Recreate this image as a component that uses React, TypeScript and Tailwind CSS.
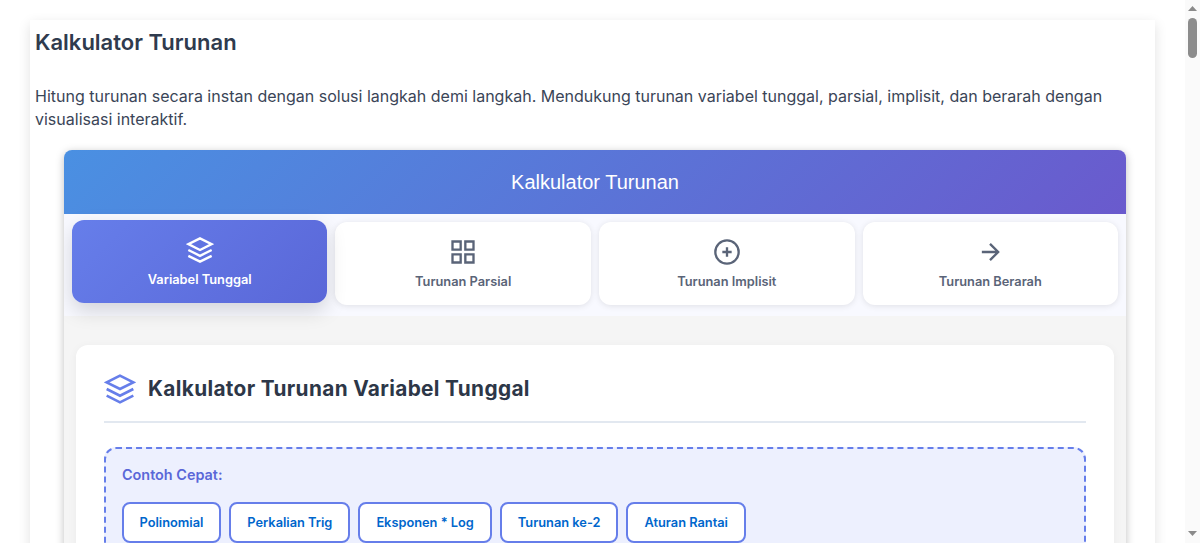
const tabs = [
  { label: "Variabel Tunggal", icon: "layers" },
  { label: "Turunan Parsial", icon: "grid" },
  { label: "Turunan Implisit", icon: "plus" },
  { label: "Turunan Berarah", icon: "arrow" },
];

const examples = ["Polinomial", "Perkalian Trig", "Eksponen * Log", "Turunan ke-2", "Aturan Rantai"];

function TabIcon({ name, className }: { name: string; className: string }) {
  return (
    <svg viewBox="0 0 24 24" fill="none" stroke="currentColor" strokeWidth="2" className={className}>
      {name === "layers" && <path d="M12 2L2 7l10 5 10-5-10-5zM2 17l10 5 10-5M2 12l10 5 10-5" />}
      {name === "grid" && <path d="M3 3h7v7H3zM14 3h7v7h-7zM14 14h7v7h-7zM3 14h7v7H3z" />}
      {name === "plus" && (
        <>
          <circle cx="12" cy="12" r="10" />
          <path d="M12 8v8M8 12h8" />
        </>
      )}
      {name === "arrow" && <path d="M5 12h14M12 5l7 7-7 7" />}
    </svg>
  );
}

function Scrollbar() {
  return (
    <div className="fixed top-0 right-0 bottom-0 flex w-[15px] flex-col items-center justify-between bg-[#fafafa] pt-1.5 pb-[7px]">
      <div className="flex flex-col items-center">
        <svg viewBox="0 0 9 5" className="h-[5px] w-[9px] fill-[#8a8a8a]">
          <path d="M4.5 0L9 5H0z" />
        </svg>
        <div className="mt-[7px] h-10 w-[9px] rounded-[5px] bg-[#8c8c8c]" />
      </div>
      <svg viewBox="0 0 9 5" className="h-[5px] w-[9px] fill-[#8a8a8a]">
        <path d="M0 0h9L4.5 5z" />
      </svg>
    </div>
  );
}

export default function App() {
  return (
    <div className="bg-white pt-5 pl-[30px] pr-[45px] font-['Inter',sans-serif]">
      <Scrollbar />
      <div className="h-[6900px] bg-white px-[5px] text-[#2d3748] shadow-[0_4px_12px_rgba(0,0,0,0.12)]">
        <h1 className="pt-2 text-[22px] leading-[28px] font-semibold text-[#2f3b4e]">Kalkulator Turunan</h1>
        <p className="mt-[29px] text-base leading-[23px] text-[#3a4557]">
          Hitung turunan secara instan dengan solusi langkah demi langkah. Mendukung turunan variabel tunggal, parsial,
          implisit, dan berarah dengan visualisasi interaktif.
        </p>

        <div className="mt-[19px] mr-6 ml-[29px] overflow-hidden rounded-t-lg bg-[#f5f5f5] shadow-[0_2px_8px_rgba(0,0,0,0.25)]">
          <div className="flex h-16 items-center justify-center bg-linear-[135deg,#4a90e2,#6a5acd] font-['Liberation_Sans',sans-serif] text-xl text-white">
            Kalkulator Turunan
          </div>

          <div className="grid grid-cols-[255.4px_255.6px_255.7px_255.3px] gap-2 bg-[#f8f9ff] px-2 pt-2 pb-[11px]">
            {tabs.map((tab, i) => (
              <div
                key={tab.label}
                className={
                  i === 0
                    ? "flex h-[83px] -translate-y-0.5 flex-col items-center rounded-xl bg-linear-[135deg,#667eea,#5a67d8] pt-4 text-white shadow-[0_8px_20px_rgba(0,0,0,0.15)]"
                    : "flex h-[83px] flex-col items-center rounded-xl bg-white pt-4 text-[#5a6478] shadow-[0_1px_6px_rgba(0,0,0,0.1)]"
                }
              >
                <TabIcon name={tab.icon} className="h-7 w-7" />
                <span className="mt-2 text-[12.8px] leading-[15px] font-semibold">{tab.label}</span>
              </div>
            ))}
          </div>

          <div className="px-3 pt-[29px]">
            <div className="rounded-xl bg-white p-7 shadow-[0_2px_10px_rgba(0,0,0,0.05)]">
              <div className="flex items-center gap-3 border-b-2 border-[#e2e8f0] pb-4">
                <TabIcon name="layers" className="h-8 w-8 text-[#667eea]" />
                <h2 className="text-[20.8px] leading-[32px] font-bold tracking-[0.35px] text-[#2d3748]">
                  Kalkulator Turunan Variabel Tunggal
                </h2>
              </div>

              <div className="mt-6 rounded-xl border-2 border-dashed border-[#667eea] bg-[#edf0fe] px-4 pt-4 pb-4">
                <div className="text-[14.4px] leading-[20px] font-semibold text-[#5a67d8]">Contoh Cepat:</div>
                <div className="mt-[17px] ml-[-0.5px] flex gap-2">
                  {examples.map((label) => (
                    <button
                      key={label}
                      className="h-[41px] rounded-lg border-2 border-[#667eea] bg-white px-4 text-[12.8px] font-semibold text-[#0066cc]"
                    >
                      {label}
                    </button>
                  ))}
                </div>
              </div>
            </div>
          </div>
        </div>
      </div>
    </div>
  );
}
